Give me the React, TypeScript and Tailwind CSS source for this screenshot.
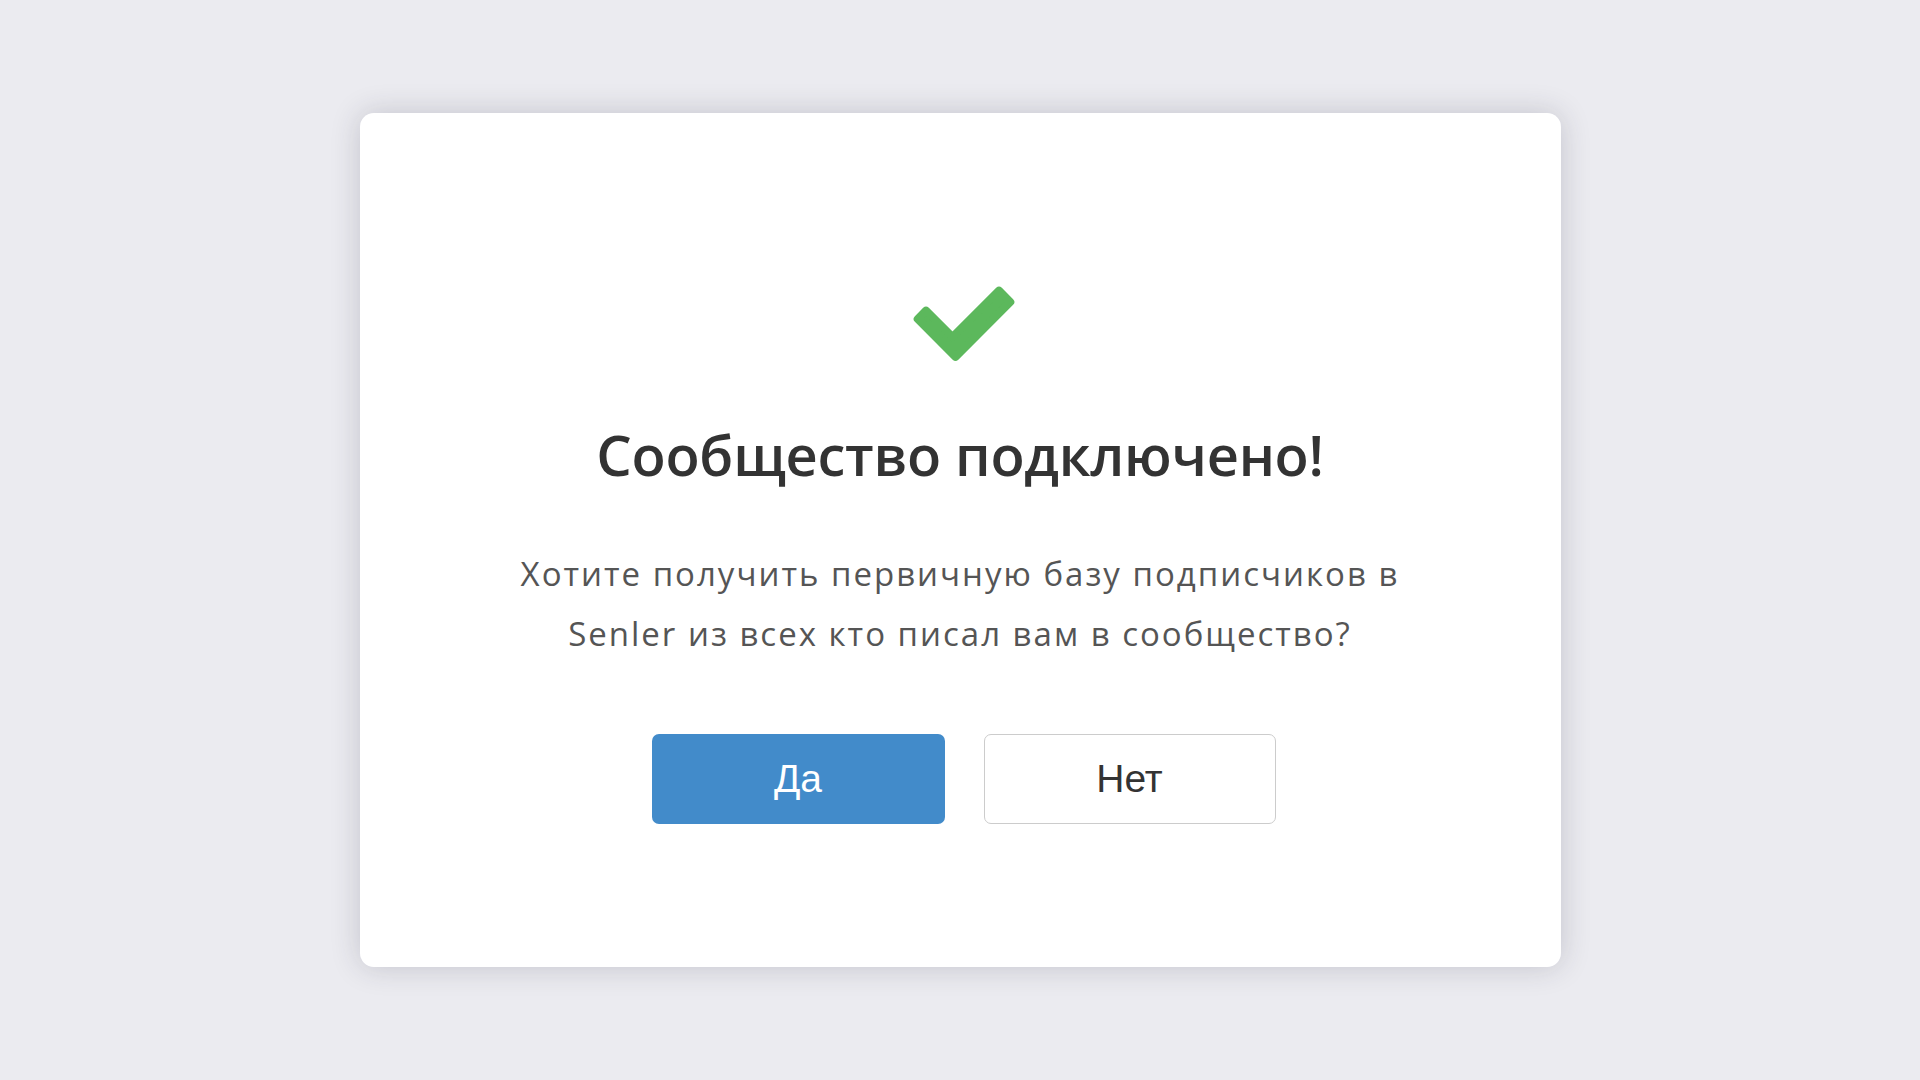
import React from 'react';

// Green check mark (filled, rounded corners)
function CheckMark() {
  return (
    <svg viewBox="0 0 108 84" className="w-[108px] h-[84px] ml-[10px]" aria-hidden="true">
      <polygon
        points="6.7,37 15,28.7 41.5,55.2 88,8.7 99.3,20 44.5,74.8"
        fill="#5cb85c"
        stroke="#5cb85c"
        strokeWidth={8}
        strokeLinejoin="round"
      />
    </svg>
  );
}

export default function App() {
  return (
    <div className="min-h-screen w-full bg-[#ebebf0] flex items-center justify-center">
      <div className="w-[1201px] h-[854px] bg-white rounded-[14px] shadow-[0_0_30px_rgba(40,40,60,0.2)] flex flex-col items-center pt-[169px]">
        <CheckMark />

        <h1 className="mt-[60px] text-[56px] leading-none font-semibold tracking-[-0.005em] text-[#333333] font-['Open_Sans',sans-serif]">
          Сообщество подключено!
        </h1>

        <p className="mt-[62px] text-[33px] leading-[60px] tracking-[2px] text-[#555555] text-center font-['Open_Sans',sans-serif]">
          Хотите получить первичную базу подписчиков в
          <br />
          Senler из всех кто писал вам в сообщество?
        </p>

        <div className="mt-[70px] ml-[7px] flex gap-[39px]">
          <button className="w-[293px] h-[90px] rounded-[7px] bg-[#428bca] text-white text-[39px] font-['Liberation_Sans',Arial,sans-serif] flex items-center justify-center">
            Да
          </button>
          <button className="w-[292px] h-[90px] rounded-[7px] bg-white border border-[#cccccc] text-[#333333] text-[39px] font-['Liberation_Sans',Arial,sans-serif] flex items-center justify-center">
            Нет
          </button>
        </div>
      </div>
    </div>
  );
}
